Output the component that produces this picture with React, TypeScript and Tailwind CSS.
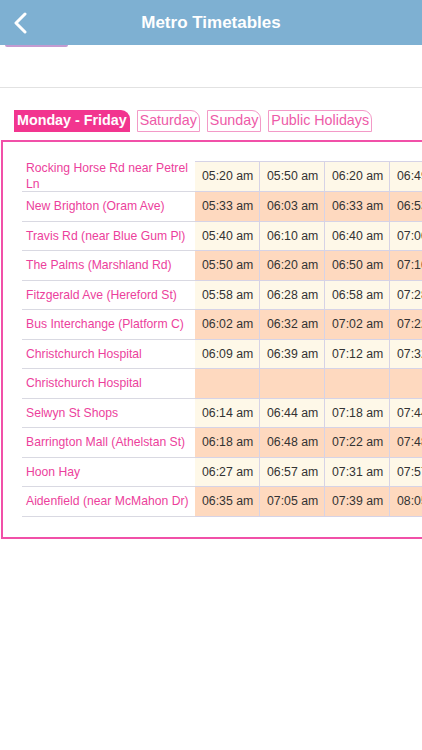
import React from "react";

const rows: { stop: string; times: string[] }[] = [
  { stop: "Rocking Horse Rd near Petrel Ln", times: ["05:20 am", "05:50 am", "06:20 am", "06:49 am"] },
  { stop: "New Brighton (Oram Ave)", times: ["05:33 am", "06:03 am", "06:33 am", "06:53 am"] },
  { stop: "Travis Rd (near Blue Gum Pl)", times: ["05:40 am", "06:10 am", "06:40 am", "07:00 am"] },
  { stop: "The Palms (Marshland Rd)", times: ["05:50 am", "06:20 am", "06:50 am", "07:10 am"] },
  { stop: "Fitzgerald Ave (Hereford St)", times: ["05:58 am", "06:28 am", "06:58 am", "07:28 am"] },
  { stop: "Bus Interchange (Platform C)", times: ["06:02 am", "06:32 am", "07:02 am", "07:22 am"] },
  { stop: "Christchurch Hospital", times: ["06:09 am", "06:39 am", "07:12 am", "07:32 am"] },
  { stop: "Christchurch Hospital", times: ["", "", "", ""] },
  { stop: "Selwyn St Shops", times: ["06:14 am", "06:44 am", "07:18 am", "07:44 am"] },
  { stop: "Barrington Mall (Athelstan St)", times: ["06:18 am", "06:48 am", "07:22 am", "07:48 am"] },
  { stop: "Hoon Hay", times: ["06:27 am", "06:57 am", "07:31 am", "07:57 am"] },
  { stop: "Aidenfield (near McMahon Dr)", times: ["06:35 am", "07:05 am", "07:39 am", "08:05 am"] },
];

const tabs = ["Saturday", "Sunday", "Public Holidays"];

export default function App() {
  return (
    <div className="w-[422px] h-[750px] overflow-hidden bg-white font-['Liberation_Sans',Arial,sans-serif]">
      {/* Header */}
      <header className="relative h-[45px] bg-[#7eb0d2] flex items-center justify-center">
        <svg className="absolute left-[12px] top-[12px]" width="16" height="22" viewBox="0 0 16 22">
          <path d="M13 2 L4 11 L13 20" fill="none" stroke="white" strokeWidth="3" strokeLinecap="round" strokeLinejoin="round" />
        </svg>
        <span className="text-white text-[17px] font-bold">Metro Timetables</span>
      </header>
      <div className="ml-[5px] w-[63px] h-[2px] bg-[#c49ad0] rounded-b" />

      {/* Search-ish area */}
      <div className="h-[40px]" />
      <div className="h-px bg-[#e2e2e2]" />

      {/* Tabs */}
      <div className="flex items-end gap-[7px] pl-[14px] pt-[22px]">
        <div className="h-[22px] px-[3px] flex items-center bg-[#f2358f] rounded-tr-[9px] text-white text-[14.3px] font-bold whitespace-nowrap">
          Monday - Friday
        </div>
        {tabs.map((t) => (
          <div
            key={t}
            className="h-[22px] px-[2px] flex items-center border border-[#f39ac7] rounded-tr-[9px] text-[#ee5aa8] text-[14.3px] whitespace-nowrap"
          >
            {t}
          </div>
        ))}
      </div>

      {/* Timetable box */}
      <div className="mt-[8px] ml-px w-[500px] border-l-2 border-t-2 border-b-2 border-[#f150a8] pt-[19px] pb-[20px] pl-[19px]">
        <div className="flex flex-col">
          {rows.map((r, i) => (
            <div key={i} className={`flex ${i === 0 ? "h-[31px]" : "h-[29.5px]"}`}>
              <div className="w-[173px] shrink-0 border-b border-[#d9d9e2] pl-[4px] pr-[2px] flex items-center text-[12.2px] leading-[16px] text-[#ec3f9c]">
                {r.stop}
              </div>
              {r.times.map((t, j) => (
                <div
                  key={j}
                  className={`w-[65px] shrink-0 border-r border-b border-[#d6d3e6] flex items-center pl-[7px] text-[12.3px] whitespace-nowrap text-[#333] ${
                    i % 2 === 0 ? "bg-[#fef8e8]" : "bg-[#fed9bf]"
                  } ${i === 0 ? "border-t" : ""}`}
                >
                  {t}
                </div>
              ))}
            </div>
          ))}
        </div>
      </div>
    </div>
  );
}
